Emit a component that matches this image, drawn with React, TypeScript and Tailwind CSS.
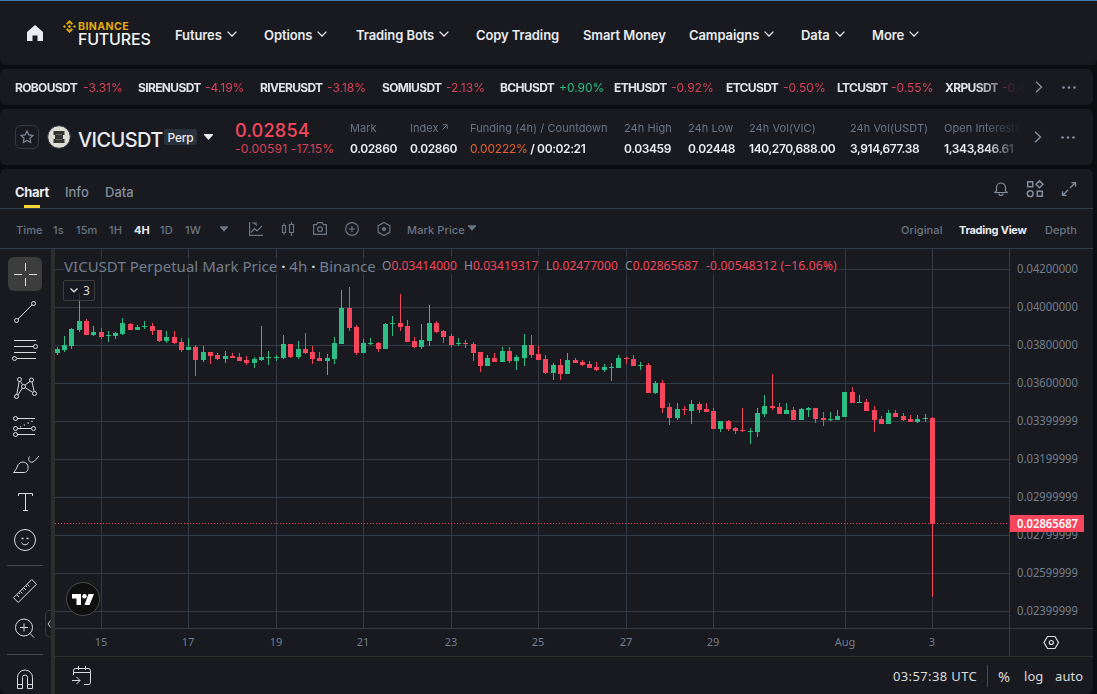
import { ReactNode } from 'react'

const NAV = [
  { label: 'Futures', w: 'w-[89px]', menu: true },
  { label: 'Options', w: 'w-[92px]', menu: true },
  { label: 'Trading Bots', w: 'w-[120px]', menu: true },
  { label: 'Copy Trading', w: 'w-[107px]', menu: false },
  { label: 'Smart Money', w: 'w-[106px]', menu: false },
  { label: 'Campaigns', w: 'w-[112px]', menu: true },
  { label: 'Data', w: 'w-[71px]', menu: true },
  { label: 'More', w: 'w-[60px]', menu: true },
]

const TICKERS = [
  { name: 'ROBOUSDT', pct: '-3.31%', w: 'w-[123px]', nw: 'w-[68px]' },
  { name: 'SIRENUSDT', pct: '-4.19%', w: 'w-[122px]', nw: 'w-[67px]' },
  { name: 'RIVERUSDT', pct: '-3.18%', w: 'w-[122px]', nw: 'w-[67px]' },
  { name: 'SOMIUSDT', pct: '-2.13%', w: 'w-[118px]', nw: 'w-[64px]' },
  { name: 'BCHUSDT', pct: '+0.90%', w: 'w-[114px]', nw: 'w-[59px]' },
  { name: 'ETHUSDT', pct: '-0.92%', w: 'w-[112px]', nw: 'w-[57px]' },
  { name: 'ETCUSDT', pct: '-0.50%', w: 'w-[111px]', nw: 'w-[57px]' },
  { name: 'LTCUSDT', pct: '-0.55%', w: 'w-[108px]', nw: 'w-[54px]' },
  { name: 'XRPUSDT', pct: '-0.4', w: 'w-[80px]', nw: 'w-[57px]' },
]

const STATS = [
  { label: 'Mark', value: '0.02860', w: 'w-[60px]' },
  { label: 'Index', value: '0.02860', w: 'w-[60px]' },
  { label: 'Funding (4h) / Countdown', value: '00:02:21', w: 'w-[154px]' },
  { label: '24h High', value: '0.03459', w: 'w-[64px]' },
  { label: '24h Low', value: '0.02448', w: 'w-[61px]' },
  { label: '24h Vol(VIC)', value: '140,270,688.00', w: 'w-[101px]' },
  { label: '24h Vol(USDT)', value: '3,914,677.38', w: 'w-[94px]' },
  { label: 'Open Interest(', value: '1,343,846.61', w: 'w-[78px]' },
]

const INTERVALS = [
  { label: 'Time', w: 'w-[37px]' },
  { label: '1s', w: 'w-[23px]' },
  { label: '15m', w: 'w-[33px]' },
  { label: '1H', w: 'w-[25px]' },
  { label: '4H', w: 'w-[26px]' },
  { label: '1D', w: 'w-[25px]' },
  { label: '1W', w: 'w-[35px]' },
]

// direction, high, body top, body bottom, low
type Candle = [number, number, number, number, number]
const CANDLES: Candle[] = [
  [1, 347, 349, 353, 355], [1, 336, 345, 350, 352], [1, 328, 329, 346, 349], [1, 293, 321, 330, 332],
  [0, 319, 321, 335, 335], [1, 326, 332, 335, 336], [0, 328, 332, 337, 339], [1, 331, 335, 336, 342],
  [1, 332, 333, 336, 339], [1, 318, 323, 334, 335], [0, 323, 324, 330, 330], [1, 325, 327, 330, 330],
  [1, 321, 326, 327, 329], [0, 323, 326, 331, 335], [0, 330, 330, 341, 342], [1, 331, 337, 341, 343],
  [0, 331, 337, 343, 344], [0, 338, 342, 350, 352], [1, 338, 347, 350, 350], [0, 345, 347, 360, 376],
  [1, 346, 352, 360, 362], [0, 352, 352, 356, 364], [0, 353, 355, 359, 360], [1, 351, 356, 359, 363],
  [0, 353, 356, 358, 358], [0, 353, 357, 361, 361], [0, 356, 360, 363, 365], [1, 357, 359, 363, 368],
  [1, 326, 357, 360, 361], [1, 351, 357, 358, 365], [1, 355, 357, 358, 361], [1, 335, 344, 358, 359],
  [0, 344, 344, 357, 358], [1, 341, 349, 357, 359], [0, 333, 349, 353, 354], [0, 346, 352, 359, 364],
  [0, 352, 358, 361, 361], [1, 354, 358, 361, 375], [1, 337, 343, 359, 364], [1, 290, 308, 344, 344],
  [0, 287, 308, 328, 331], [0, 325, 327, 353, 355], [1, 339, 343, 353, 353], [1, 338, 343, 344, 345],
  [0, 342, 343, 349, 352], [1, 323, 324, 349, 349], [1, 316, 323, 324, 336], [0, 294, 323, 327, 331],
  [0, 320, 326, 342, 342], [0, 337, 341, 347, 348], [1, 324, 340, 347, 349], [1, 305, 323, 341, 346],
  [0, 321, 323, 332, 333], [0, 330, 331, 337, 343], [0, 334, 336, 345, 347], [1, 338, 343, 344, 346],
  [0, 340, 343, 344, 348], [0, 342, 344, 353, 361], [0, 352, 352, 366, 372], [1, 355, 358, 366, 366],
  [0, 353, 358, 362, 362], [1, 347, 351, 362, 362], [0, 347, 351, 361, 363], [1, 355, 357, 361, 370],
  [1, 334, 345, 358, 366], [0, 335, 345, 355, 358], [0, 346, 354, 360, 360], [0, 355, 359, 373, 374],
  [1, 363, 365, 373, 380], [0, 359, 365, 374, 380], [1, 353, 360, 374, 374], [0, 358, 360, 363, 363],
  [0, 360, 362, 365, 366], [0, 361, 364, 368, 368], [0, 362, 367, 370, 371], [1, 364, 367, 370, 372],
  [1, 363, 367, 368, 381], [1, 355, 358, 368, 368], [0, 357, 358, 359, 364], [0, 355, 359, 366, 366],
  [1, 362, 365, 366, 370], [0, 363, 365, 393, 393], [1, 381, 383, 393, 394], [0, 380, 383, 408, 413],
  [0, 403, 407, 418, 425], [1, 403, 409, 418, 420], [0, 406, 409, 410, 415], [1, 400, 404, 411, 424],
  [0, 402, 404, 410, 413], [0, 403, 409, 412, 412], [0, 408, 411, 429, 429], [1, 421, 421, 429, 432],
  [0, 420, 421, 429, 431], [0, 427, 428, 431, 434], [0, 408, 430, 431, 432], [1, 428, 431, 432, 444],
  [1, 408, 413, 432, 437], [1, 395, 406, 414, 417], [0, 374, 406, 408, 410], [0, 403, 407, 414, 414],
  [1, 403, 410, 414, 414], [0, 407, 410, 420, 420], [1, 408, 409, 420, 420], [1, 407, 408, 410, 417],
  [0, 408, 408, 419, 423], [0, 412, 418, 420, 426], [1, 412, 419, 420, 421], [1, 410, 416, 420, 420],
  [1, 392, 392, 417, 417], [0, 387, 392, 403, 403], [1, 395, 402, 403, 403], [0, 399, 402, 411, 411],
  [0, 406, 410, 420, 432], [0, 416, 419, 424, 424], [1, 410, 413, 424, 424], [0, 410, 413, 417, 417],
  [0, 413, 416, 420, 421], [0, 415, 419, 422, 422], [1, 415, 419, 422, 423], [1, 414, 418, 419, 422],
  [0, 417, 418, 524, 597],
]

const PRICES = [
  '0.04200000', '0.04000000', '0.03800000', '0.03600000', '0.03399999',
  '0.03199999', '0.02999999', '0.02799999', '0.02599999', '0.02399999',
]
const PRICE_Y = [269, 307, 345, 383, 421, 459, 497, 535, 573, 611]

const DATES: [string, number][] = [
  ['15', 101], ['17', 188], ['19', 276], ['21', 363], ['23', 451],
  ['25', 538], ['27', 626], ['29', 713], ['Aug', 845], ['3', 932],
]

function Chevron() {
  return (
    <svg width="10" height="6" viewBox="0 0 10 6" fill="none" stroke="#eaecef" strokeWidth="1.3" className="-mt-[2px]">
      <path d="M.6.6 5 5 9.4.6" />
    </svg>
  )
}

function Caret({ className }: { className: string }) {
  return (
    <svg width="9" height="6" viewBox="0 0 9 6" className={className}>
      <path d="M0 0h9v1L4.5 6 0 1z" fill="currentColor" />
    </svg>
  )
}

function RowEnd() {
  return (
    <div className="flex items-center text-[#848e9c]">
      <svg width="8" height="12" viewBox="0 0 8 12" fill="none" stroke="currentColor" strokeWidth="1.4">
        <path d="M1 .7 6.5 6 1 11.3" />
      </svg>
      <svg width="14" height="3" viewBox="0 0 14 3" fill="currentColor" className="ml-[19px]">
        <circle cx="1.5" cy="1.5" r="1.3" />
        <circle cx="7" cy="1.5" r="1.3" />
        <circle cx="12.5" cy="1.5" r="1.3" />
      </svg>
    </div>
  )
}

function Header() {
  return (
    <header className="flex h-[65px] items-center rounded-b-md border-t border-[#4878b0] bg-[#181a20] pl-[27px] pt-[3px]">
      <svg width="16" height="16" viewBox="0 0 16 16" fill="#eaecef" className="-mt-[3px]">
        <path d="M8 0 0 7v9h5.500v-5.500h5V16H16V7z" />
      </svg>
      <div className="-mt-1 ml-5 flex h-[26px] w-[112px]">
        <svg width="13" height="13" viewBox="0 0 13 13" fill="#e5ac0b">
          <path d="M6.5 0 10 3.5 8.6 4.9 6.5 2.8 4.4 4.9 3 3.5zM6.5 13 3 9.5l1.4-1.4 2.1 2.1 2.1-2.1L10 9.5zM1.5 5 3 6.5 1.5 8 0 6.5zM11.5 5 13 6.5 11.5 8 10 6.5zM6.5 4.7l1.8 1.8-1.8 1.8-1.8-1.8z" />
        </svg>
        <div className="ml-[2px] flex flex-col whitespace-nowrap">
          <span className="mt-[2px] text-[10.5px] font-bold leading-[10px] tracking-[0.45px] text-[#e5ac0b]">BINANCE</span>
          <span className="text-[16px] font-medium leading-[15px] tracking-[-0.2px] text-[#f5f5f5]">FUTURES</span>
        </div>
      </div>
      <nav className="flex text-[13px] font-semibold leading-4 tracking-[-0.1px] text-[#eaecef]">
        {NAV.map((item) => (
          <div key={item.label} className={`flex items-center gap-[5px] whitespace-nowrap ${item.w}`}>
            {item.label}
            {item.menu && <Chevron />}
          </div>
        ))}
      </nav>
    </header>
  )
}

function TickerBar() {
  return (
    <section className="flex h-9 items-center rounded-md bg-[#181a20] pl-[15px]">
      <div className="flex w-[1020px] whitespace-nowrap mask-r-from-94% mask-r-to-99% pt-[2px] text-[12px] leading-4">
        {TICKERS.map((t) => (
          <div key={t.name} className={`flex shrink-0 ${t.w}`}>
            <span className={`shrink-0 font-bold tracking-[-0.65px] text-[#e0e2e5] ${t.nw}`}>{t.name}</span>
            <span className={t.pct[0] === '+' ? 'text-[#2ebd85]' : 'text-[#d8415a]'}>{t.pct}</span>
          </div>
        ))}
      </div>
      <RowEnd />
    </section>
  )
}

function SymbolBar() {
  return (
    <section className="flex h-14 items-center rounded-md bg-[#181a20] pl-[15px]">
      <div className="flex size-6 shrink-0 items-center justify-center rounded-md border border-[#333b47]">
        <svg width="14" height="14" viewBox="0 0 14 14" fill="none" stroke="#848e9c" strokeWidth="1.1">
          <path d="m7 1 1.8 3.9 4.2.5-3.1 2.9.8 4.2L7 10.4l-3.7 2.1.8-4.2L1 5.4l4.2-.5z" />
        </svg>
      </div>
      <svg width="24" height="24" viewBox="0 0 24 24" className="ml-2 shrink-0">
        <circle cx="12" cy="12" r="11.3" fill="#deddd5" stroke="#30343a" strokeWidth="1" />
        <path d="M6.500 6h11v4H16v4h1.500v4h-11v-4H8v-4H6.500z" fill="#343532" />
        <path d="M9 9.500h6M9 14.500h6" stroke="#66665f" />
      </svg>
      <div className="ml-[7px] flex w-[157px] shrink-0 items-center">
        <span className="w-[86px] whitespace-nowrap pt-[5px] text-[20px] font-medium leading-6 tracking-[-0.6px] text-[#eaecef]">VICUSDT</span>
        <span className="flex h-4 w-[33px] items-center justify-center rounded-xs bg-[#29313d] pt-px text-[12px] font-medium tracking-[-0.2px] text-[#eaecef]">Perp</span>
        <Caret className="ml-[7px] text-[#eaecef]" />
      </div>
      <div className="w-[115px] shrink-0 whitespace-nowrap pt-1 text-[#f6465d]">
        <div className="text-[18px] font-medium leading-5 tracking-[0.25px]">0.02854</div>
        <div className="text-[12px] leading-4 tracking-[0.2px] text-[#d8415a]">-0.00591 -17.15%</div>
      </div>
      <div className="flex w-[684px] shrink-0 whitespace-nowrap mask-r-from-93% mask-r-to-98% pt-[2px]">
        {STATS.map((s, i) => (
          <div key={s.label} className={`shrink-0 ${s.w}`}>
            <div className="flex text-[11px] leading-4 tracking-[0.05px] text-[#6b7482]">
              {s.label}
              {i === 1 && (
                <svg width="6" height="6" viewBox="0 0 6 6" fill="none" stroke="currentColor" className="ml-[3px] mt-1">
                  <path d="M.5 5.500 5 1M1 .8h4.200V5" />
                </svg>
              )}
            </div>
            <div className="mt-[5px] text-[12px] font-semibold leading-4 tracking-[-0.4px] text-[#eaecef]">
              {i === 2 && <span className="font-normal tracking-[-0.2px] text-[#e8612c]">0.00222%</span>}
              {i === 2 && ' / '}
              {s.value}
            </div>
          </div>
        ))}
      </div>
      <RowEnd />
    </section>
  )
}

function Tabs() {
  return (
    <div className="flex h-10 shrink-0 items-center border-b border-[#333b47] pl-[15px] pr-4 text-[13px] font-medium text-[#848e9c]">
      <div className="relative flex h-10 w-[50px] items-center pt-2 font-bold tracking-[-0.3px] text-[#eaecef]">
        Chart
        <span className="absolute bottom-px left-[9px] h-[3px] w-4 bg-[#fcd535]" />
      </div>
      <div className="w-10 pt-2">Info</div>
      <div className="pt-2">Data</div>
      <div className="ml-auto flex items-center gap-[17px]">
        <svg width="16" height="16" viewBox="0 0 16 16" fill="none" stroke="currentColor" strokeWidth="1.2">
          <path d="M2 11.500h12l-1.500-2V6.500a4.500 4.500 0 0 0-9 0v3zM6 12.500a2 2 0 0 0 4 0" />
        </svg>
        <svg width="18" height="18" viewBox="0 0 18 18" fill="none" stroke="currentColor" strokeWidth="1.5">
          <path d="M1.700 1.700h5v5h-5zM11.300 11.300h5v5h-5zM13.500.9l3.400 3.400-3.400 3.400-3.400-3.400z" />
          <circle cx="4.200" cy="13.700" r="2.900" />
        </svg>
        <svg width="16" height="16" viewBox="0 0 16 16" fill="none" stroke="currentColor" strokeWidth="1.300">
          <path d="M9 7 14 2M7 9l-5 5M10.500 1.700h4v4M1.500 10.300v4h4" />
        </svg>
      </div>
    </div>
  )
}

function ChartToolbar() {
  return (
    <div className="flex h-10 shrink-0 items-center border-b border-[#333b47] pl-4 pr-4 pt-[3px] text-[11px] font-medium tracking-[0.1px] text-[#6b7482]">
      {INTERVALS.map((t) => (
        <span key={t.label} className={`${t.w} ${t.label === '4H' ? 'font-bold text-[#eaecef]' : ''}`}>{t.label}</span>
      ))}
      <Caret className="-mt-[3px] w-2" />
      <div className="-mt-[2px] ml-5 flex items-center gap-4">
        <svg width="16" height="16" viewBox="0 0 16 16" fill="none" stroke="currentColor" strokeWidth="1.200">
          <path d="M1.600 1v13.400H15M3 11.500l3.500-4 2.500 2.500 5-5M4 2h5M6 2l3 2.500" />
        </svg>
        <svg width="16" height="16" viewBox="0 0 16 16" fill="none" stroke="currentColor" strokeWidth="1.200">
          <path d="M2.500 4.500h3v7h-3zM4 2.500v2M4 11.500v2M9.500 3.500h4v8h-4zM11.500 1v2.500M11.500 11.500V15" />
        </svg>
        <svg width="16" height="16" viewBox="0 0 16 16" fill="none" stroke="currentColor" strokeWidth="1.200">
          <path d="M1.600 3.700h3l1-2h4.800l1 2h3v9.700H1.600z" />
          <circle cx="8" cy="8.300" r="2.400" />
        </svg>
        <svg width="16" height="16" viewBox="0 0 16 16" fill="none" stroke="currentColor" strokeWidth="1.200">
          <circle cx="8" cy="8" r="6.400" />
          <path d="M8 5v6M5 8h6" />
        </svg>
        <svg width="16" height="16" viewBox="0 0 16 16" fill="none" stroke="currentColor" strokeWidth="1.200">
          <path d="m8 1.500 5.800 3.200v6.600L8 14.500l-5.800-3.200V4.700z" />
          <circle cx="8" cy="8" r="1.500" fill="currentColor" />
        </svg>
      </div>
      <span className="ml-[15px] w-[61px] whitespace-nowrap">Mark Price</span>
      <Caret className="-mt-1 w-2" />
      <div className="ml-auto flex whitespace-nowrap">
        <span className="w-[58px]">Original</span>
        <span className="w-[86px] font-bold tracking-[-0.25px] text-[#eaecef]">Trading View</span>
        <span>Depth</span>
      </div>
    </div>
  )
}

function Tool({ children, active }: { children: ReactNode; active?: boolean }) {
  return (
    <div className={`flex h-[34px] w-[34px] shrink-0 items-center justify-center rounded-md ${active ? 'bg-[#3d3d3d]' : ''}`}>
      <svg width="28" height="28" viewBox="0 0 28 28" fill="none" stroke="#dbdbdb" strokeWidth="1">
        {children}
      </svg>
    </div>
  )
}

function DrawingTools() {
  return (
    <div className="relative flex w-[55px] shrink-0 flex-col items-start gap-1 overflow-hidden border-r-4 border-[#2e2e2e] pl-2 pt-2">
      <Tool active>
        <path d="M14.500 3v8M14.500 18v8M3 14.500h8M18 14.500h8" />
      </Tool>
      <Tool>
        <circle cx="5.500" cy="22.500" r="2" />
        <circle cx="22.500" cy="5.500" r="2" />
        <path d="M7 21 21 7" />
      </Tool>
      <Tool>
        <path d="M3 4.500h22M3 10.500h20M3 16.500h22M6 22.500h19" />
        <circle cx="24.500" cy="10.500" r="2" />
        <circle cx="3.500" cy="22.500" r="2" />
      </Tool>
      <Tool>
        <circle cx="8.500" cy="5.500" r="2" />
        <circle cx="20.500" cy="6" r="2" />
        <circle cx="12.500" cy="12.500" r="2" />
        <circle cx="5.500" cy="22.500" r="2" />
        <circle cx="23.500" cy="19.500" r="2" />
        <path d="m8.200 7.500-2.400 13M9.500 7.500l2.200 3.200M14 11l5-3.600M14.200 13.700l7.600 4.700M21 8l2.200 9.500M7 21l4.300-7" />
      </Tool>
      <Tool>
        <path d="M6.500 6.500H24M6.500 16.500h14M6.500 22.500H24" />
        <path d="m9 15 15-7" strokeWidth="1.300" strokeDasharray="1.200 3" />
        <circle cx="4.500" cy="6.500" r="2" />
        <circle cx="4.500" cy="16.500" r="2" />
        <circle cx="22.500" cy="16.500" r="2" />
        <circle cx="4.500" cy="22.500" r="2" />
      </Tool>
      <Tool>
        <path d="M2.500 22.500h11c3 0 5-5 2.500-8.500-3-3.500-8-2-9.500 2-1 3-2.500 5-4 6.500zM18.500 6.500c-2 3 0 6.500 3.500 5.500 2-1 4-4 6-6" />
      </Tool>
      <Tool>
        <path d="M7.500 8V5.500h14V8M14.500 5.500v17M12 22.500h5" />
      </Tool>
      <Tool>
        <circle cx="14" cy="14" r="10.500" />
        <path d="M10.500 16.500c1 3 6 3 7 0" />
        <path d="M10.500 12.500h2M15.500 12.500h2" strokeWidth="1.500" />
      </Tool>
      <div className="-ml-px mb-1 mt-1 h-px w-9 shrink-0 bg-[#4a4a4a]" />
      <Tool>
        <path d="M2.500 20.800 20.800 2.500l4.700 4.700L7.200 25.500zM6 18l2 2M9.500 14.500l2 2M13 11l2 2M16.500 7.500l2 2M8 16l1 1M11.500 12.500l1 1M15 9l1 1" />
      </Tool>
      <Tool>
        <circle cx="13" cy="12.500" r="8.500" />
        <path d="M9 12.500h8M13 8.500v8M19 18.500l4 4" />
      </Tool>
      <div className="-ml-px mb-[3px] mt-1 h-px w-9 shrink-0 bg-[#4a4a4a]" />
      <Tool>
        <path d="M6.500 23.500V12.500a7.500 7.500 0 0 1 15 0v11h-5v-11a2.500 2.500 0 0 0-5 0v11zM6.500 19.500h5M16.500 19.500h5" />
      </Tool>
      <div className="absolute -right-[2px] top-[361px] flex h-[27px] w-2 items-center justify-center rounded-l border border-[#363636] bg-[#181a20]">
        <svg width="4" height="8" viewBox="0 0 4 8" fill="none" stroke="#b8b8b8" className="shrink-0">
          <path d="M3.500.5 1 4l2.500 3.500" />
        </svg>
      </div>
    </div>
  )
}

function PriceChart() {
  return (
    <svg width="1038" height="408" viewBox="55 249 1038 408" className="block" shapeRendering="crispEdges">
      <g fill="#333b47">
        {PRICE_Y.map((y) => (
          <rect key={y} x="55" y={y} width="954" height="1" />
        ))}
        {DATES.map(([label, x]) => (
          <rect key={label} x={x} y="249" width="1" height="379" />
        ))}
        <rect x="55" y="628" width="1038" height="1" />
        <rect x="1009" y="249" width="1" height="407" />
      </g>
      <rect x="55" y="656" width="1038" height="1" fill="#2e2e2e" />
      {CANDLES.map(([up, high, top, bottom, low], i) => {
        const x = Math.floor(57.35 + 7.2925 * i)
        return (
          <g key={i} fill={up ? '#2ebd85' : '#f6465d'}>
            <rect x={x} y={high} width="1" height={low - high} />
            <rect x={x - 2} y={top} width="5" height={bottom - top} />
          </g>
        )
      })}
      <path d="M55 523.500h954" stroke="#f6465d" strokeDasharray="1 2" />
      <g fontFamily='"Noto Sans", sans-serif' fontSize="12" fill="#747d8b">
        {PRICES.map((p, i) => (
          <text key={p} x="1017" y={PRICE_Y[i] + 4} textLength="61" lengthAdjust="spacingAndGlyphs">{p}</text>
        ))}
        {DATES.map(([label, x]) => (
          <text key={label} x={x} y="646" textAnchor="middle" fontSize="11">{label}</text>
        ))}
        <rect x="1010" y="515" width="74" height="17" fill="#f6465d" />
        <text x="1017" y="528" textLength="61" lengthAdjust="spacingAndGlyphs" fill="#fff" fontWeight="600">0.02865687</text>
      </g>
      <g fill="none" stroke="#dbdbdb" strokeWidth="1.200" shapeRendering="auto">
        <path d="M1047.500 636.500h7.500l3.500 6-3.500 6h-7.500l-3.500-6z" />
        <circle cx="1051.300" cy="642.500" r="2" />
      </g>
    </svg>
  )
}

function ChartLegend() {
  return (
    <div className="absolute left-[9px] top-[7px] flex items-center whitespace-nowrap font-['Noto_Sans'] text-[#747d8b]">
      <span className="w-[318px] bg-[#181a20]/60 text-[15px] leading-[18px] tracking-[0.02px]">
        VICUSDT Perpetual Mark Price <b className="text-[#dbdbdb]">·</b> 4h <b className="text-[#dbdbdb]">·</b> Binance
      </span>
      <div className="flex bg-[#181a20]/60 pt-px text-[12px] leading-[18px] tracking-[0.05px] text-[#f6465d]">
        <span className="w-[82px]"><i className="not-italic text-[#848e9c]">O</i>0.03414000</span>
        <span className="w-[82px]"><i className="not-italic text-[#848e9c]">H</i>0.03419317</span>
        <span className="w-[79px]"><i className="not-italic text-[#848e9c]">L</i>0.02477000</span>
        <span className="w-[81px]"><i className="not-italic text-[#848e9c]">C</i>0.02865687</span>
        <span className="tracking-[0.2px]">-0.00548312 (−16.06%)</span>
      </div>
    </div>
  )
}

function ChartFooter() {
  return (
    <div className="flex h-[37px] items-center pl-4 pr-[10px] font-['Noto_Sans'] text-[13px] text-[#dbdbdb]">
      <svg width="21" height="20" viewBox="0 0 21 20" fill="none" stroke="#dbdbdb">
        <path d="M2.500 9V4.500q0-2 2-2h13q2 0 2 2v12q0 2-2 2H13M2.500 6.500h17M7.500 0v4M14.500 0v4M1 14.500h8M5.500 11l3.500 3.500L5.500 18" />
      </svg>
      <span className="ml-auto pt-[2px] tracking-[0.38px]">03:57:38 UTC</span>
      <span className="ml-[10px] h-[22px] w-px bg-[#4a4a4a]" />
      <span className="ml-[10px] w-[26px] pt-[2px] text-[14.5px]">%</span>
      <span className="w-[31px] pt-[2px]">log</span>
      <span className="pt-[2px]">auto</span>
    </div>
  )
}

export default function App() {
  return (
    <div className="flex h-[694px] w-[1097px] flex-col gap-1 overflow-hidden bg-[#0b0e11] font-['Inter']">
      <Header />
      <div className="flex min-h-0 flex-1 flex-col gap-1 pr-1">
        <TickerBar />
        <SymbolBar />
        <main className="flex min-h-0 flex-1 flex-col rounded-md bg-[#181a20]">
          <Tabs />
          <ChartToolbar />
          <div className="flex min-h-0 flex-1">
            <DrawingTools />
            <div className="relative flex flex-1 flex-col">
              <PriceChart />
              <ChartLegend />
              <div className="absolute left-2 top-[31px] flex h-[21px] w-8 items-center gap-[5px] rounded-xs border border-[#3d3d3d] bg-[#181a20]/80 pl-[6px] font-['Noto_Sans'] text-[12px] text-[#dbdbdb]">
                <svg width="8" height="5" viewBox="0 0 8 5" fill="none" stroke="currentColor" strokeWidth="1.300">
                  <path d="m.5.5 3.500 3.300L7.500.5" />
                </svg>
                3
              </div>
              <div className="absolute left-[11px] top-[333px] flex size-[34px] items-center justify-center rounded-full border border-[#4a4a4a] bg-[#0f0f0f]">
                <svg width="22" height="12" viewBox="0 0 22 12" fill="#fff" className="mt-[2px]">
                  <path d="M0 0h9v11H4.500V4.500H0zM16.500 0H22l-4.500 11h-5z" />
                  <circle cx="12.500" cy="2.300" r="2.200" />
                </svg>
              </div>
              <ChartFooter />
            </div>
          </div>
        </main>
      </div>
    </div>
  )
}
